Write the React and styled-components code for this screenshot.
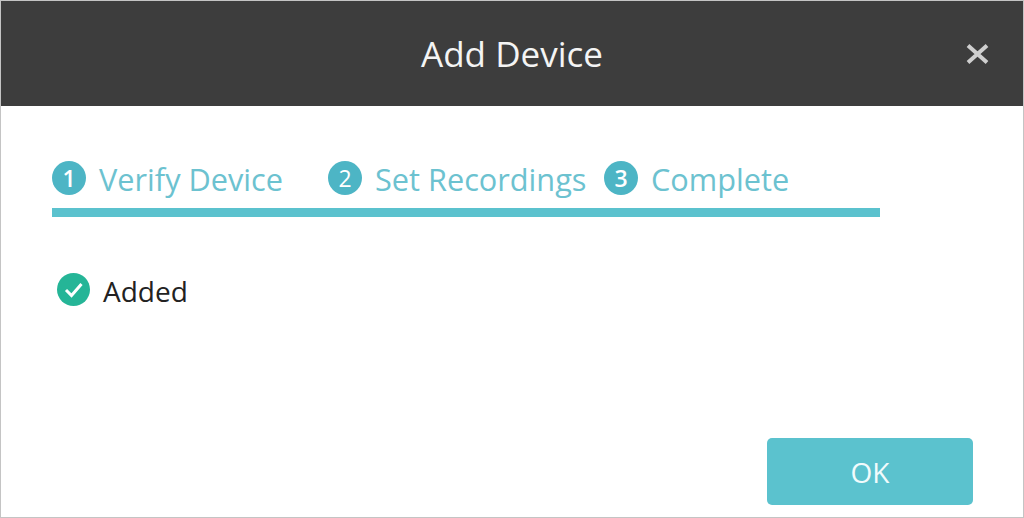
import styled, { createGlobalStyle } from "styled-components"

const GlobalStyle = createGlobalStyle`
    html, body {
        margin: 0;
        padding: 0;
        background: #fff;
    }
`

const Dialog = styled.div`
    width: 1024px;
    height: 518px;
    box-sizing: border-box;
    border: 1px solid #c4c4c4;
    display: flex;
    flex-direction: column;
    font-family: "Open Sans", sans-serif;
    background: #fff;
`

const Header = styled.div`
    height: 105px;
    flex-shrink: 0;
    background: #3d3d3d;
    display: flex;
    align-items: center;
    justify-content: center;
    position: relative;
`

const Title = styled.h1`
    margin: 0;
    font-size: 35px;
    font-weight: 400;
    color: #f4f4f4;
`

const Close = styled.button`
    position: absolute;
    top: 41px;
    right: 33px;
    width: 24px;
    height: 24px;
    padding: 0;
    border: none;
    background: none;
    display: flex;
`

const Body = styled.div`
    flex: 1;
    display: flex;
    flex-direction: column;
    padding: 54px 50px 12px 51px;
`

const Steps = styled.div`
    width: 828px;
    display: grid;
    grid-template-columns: repeat(3, 276px);
    height: 48px;
    border-bottom: 9px solid #5bc2ce;
`

const Step = styled.div`
    display: flex;
    align-items: flex-start;
    gap: 13px;
    color: #6cc2d0;
    font-size: 30.7px;
    line-height: 38px;
`

const StepNumber = styled.span`
    width: 34px;
    height: 34px;
    margin-top: 1px;
    border-radius: 50%;
    background: #4db5c5;
    color: #fff;
    font-size: 23px;
    font-weight: ${({ $bold }) => ($bold ? 600 : 400)};
    line-height: 34px;
    text-align: center;
    flex-shrink: 0;
`

const Status = styled.div`
    display: flex;
    align-items: center;
    gap: 13px;
    margin-top: 55px;
    margin-left: 5px;
    color: #222;
    font-size: 28px;
`

const CheckIcon = styled.svg`
    width: 33px;
    height: 33px;
    margin-bottom: 4px;
`

const Footer = styled.div`
    margin-top: auto;
    display: flex;
    justify-content: flex-end;
`

const OkButton = styled.button`
    width: 206px;
    height: 67px;
    border: none;
    border-radius: 5px;
    background: #5bc2ce;
    color: #f2fbfc;
    font-family: inherit;
    font-size: 28px;
`

const steps = [
    { label: "Verify Device", bold: true },
    { label: "Set Recordings", bold: false },
    { label: "Complete", bold: true },
]

export default function App() {
    return (
        <Dialog>
            <GlobalStyle />
            <Header>
                <Title>Add Device</Title>
                <Close aria-label="Close">
                    <svg width="24" height="24" viewBox="0 0 24 24">
                        <path d="M2 3.5L21 20.5M21 3.5L2 20.5" stroke="#cfcfcf" strokeWidth="4" />
                    </svg>
                </Close>
            </Header>
            <Body>
                <Steps>
                    {steps.map((step, index) => (
                        <Step key={step.label}>
                            <StepNumber $bold={step.bold}>{index + 1}</StepNumber>
                            {step.label}
                        </Step>
                    ))}
                </Steps>
                <Status>
                    <CheckIcon viewBox="0 0 33 33">
                        <circle cx="16.5" cy="16.5" r="16.5" fill="#25b597" />
                        <path d="M9 17L14.5 22.5L24.5 11" fill="none" stroke="#fff" strokeWidth="3" />
                    </CheckIcon>
                    Added
                </Status>
                <Footer>
                    <OkButton>OK</OkButton>
                </Footer>
            </Body>
        </Dialog>
    )
}
